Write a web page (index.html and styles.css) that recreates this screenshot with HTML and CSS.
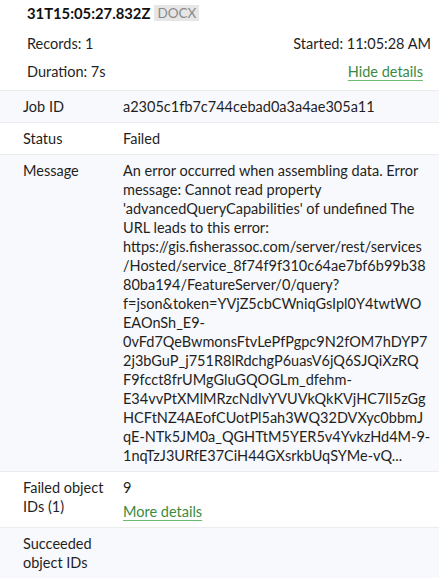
FILE: index.html
```html
<!DOCTYPE html>
<html>
<head>
<meta charset="utf-8">
<link rel="stylesheet" href="styles.css">
</head>
<body>
<div class="panel">
  <div class="header">
    <div class="title-row">
      <span class="title">31T15:05:27.832Z</span>
      <span class="badge">DOCX</span>
    </div>
    <div class="meta-row">
      <span>Records: 1</span>
      <span>Started: 11:05:28 AM</span>
    </div>
    <div class="meta-row">
      <span>Duration: 7s</span>
      <a class="link link-right" href="#">Hide details</a>
    </div>
  </div>
  <div class="table">
    <div class="row alt">
      <div class="label">Job ID</div>
      <div class="value">a2305c1fb7c744cebad0a3a4ae305a11</div>
    </div>
    <div class="row">
      <div class="label">Status</div>
      <div class="value">Failed</div>
    </div>
    <div class="row alt">
      <div class="label">Message</div>
      <div class="value msg">An error occurred when assembling data. Error<br>message: Cannot read property<br>'advancedQueryCapabilities' of undefined The<br>URL leads to this error:<br>https://gis.fisherassoc.com/server/rest/services<br>/Hosted/service_8f74f9f310c64ae7bf6b99b38<br>80ba194/FeatureServer/0/query?<br>f=json&amp;token=YVjZ5cbCWniqGsIpl0Y4twtWO<br>EAOnSh_E9-<br>0vFd7QeBwmonsFtvLePfPgpc9N2fOM7hDYP7<br>2j3bGuP_j751R8lRdchgP6uasV6jQ6SJQiXzRQ<br>F9fcct8frUMgGluGQOGLm_dfehm-<br>E34vvPtXMlMRzcNdIvYVUVkQkKVjHC7lI5zGg<br>HCFtNZ4AEofCUotPl5ah3WQ32DVXyc0bbmJ<br>qE-NTk5JM0a_QGHTtM5YER5v4YvkzHd4M-9-<br>1nqTzJ3URfE37CiH44GXsrkbUqSYMe-vQ...</div>
    </div>
    <div class="row">
      <div class="label">Failed object IDs (1)</div>
      <div class="value">
        <div>9</div>
        <a class="link more" href="#">More details</a>
      </div>
    </div>
    <div class="row alt">
      <div class="label">Succeeded object IDs</div>
      <div class="value"></div>
    </div>
  </div>
</div>
</body>
</html>
```

FILE: styles.css
```css
html, body {
  margin: 0;
  padding: 0;
  background: #ffffff;
}
body {
  font-family: Lato, "Open Sans", "Liberation Sans", sans-serif;
  font-size: 14.5px;
  color: #1f1f1f;
}
.header {
  padding: 0 8px 5px 27px;
}
.title-row {
  display: flex;
  align-items: center;
  gap: 4px;
  height: 26px;
}
.title {
  font-weight: bold;
  font-size: 14.8px;
  color: #111;
}
.badge {
  background: #e6e6e6;
  color: #8a8a8a;
  font-size: 13.5px;
  line-height: 16px;
  padding: 0 3px;
}
.meta-row {
  display: flex;
  justify-content: space-between;
  align-items: center;
  height: 28px;
}
.title-row + .meta-row {
  margin-top: 3px;
}
.link {
  color: #3b8a40;
  text-decoration: underline;
  text-decoration-color: #6cbc70;
  text-underline-offset: 3px;
}
.link-right {
  margin-right: 8px;
}
.table {
  border-bottom: 1px solid #ececec;
}
.row {
  display: grid;
  grid-template-columns: 100px 1fr;
  padding: 6px 8px 6px 23px;
  border-top: 1px solid #ececec;
  line-height: 19px;
}
.row.alt {
  background: #f8f9fc;
}
.label {
  padding-right: 10px;
}
.msg {
  white-space: nowrap;
}
.more {
  display: inline-block;
  margin-top: 5px;
}
```
